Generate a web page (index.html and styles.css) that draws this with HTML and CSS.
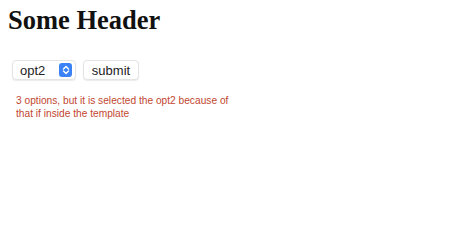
FILE: index.html
```html
<!DOCTYPE html>
<html lang="en">

<head>
  <meta charset="UTF-8">
  <meta name="viewport" content="width=device-width, initial-scale=1.0">
  <title>Some Header</title>
  <link rel="stylesheet" href="styles.css">
</head>

<body>
  <h1>Some Header</h1>
  <form class="row">
    <div class="select">
      <span>opt2</span>
      <span class="arrows">
        <svg width="8" height="10" viewBox="0 0 8 10">
          <path d="M1.5 4 L4 1.5 L6.5 4 M1.5 6 L4 8.5 L6.5 6" fill="none" stroke="#fff" stroke-width="1.4" stroke-linecap="round" stroke-linejoin="round"/>
        </svg>
      </span>
    </div>
    <button type="button" class="btn">submit</button>
  </form>
  <p class="note">3 options, but it is selected the opt2 because of<br>that if inside the template</p>
</body>

</html>
```

FILE: styles.css
```css
body {
  margin: 8px;
  background: #fff;
}
h1 {
  font-family: "Liberation Serif", serif;
  font-size: 26.5px;
  font-weight: bold;
  margin: 0;
  line-height: 24px;
  color: #111;
}
.row {
  display: flex;
  gap: 7px;
  margin: 28px 0 0 4px;
  font-family: "Liberation Sans", Arial, sans-serif;
  font-size: 13px;
}
.select, .btn {
  height: 20px;
  box-sizing: border-box;
  border: 1px solid #e4e4e4;
  border-radius: 4px;
  background: #fff;
  box-shadow: 0 1px 1px rgba(0, 0, 0, 0.08);
  color: #222;
  font-family: inherit;
  font-size: 13px;
}
.select {
  width: 64px;
  display: flex;
  align-items: center;
  justify-content: space-between;
  padding: 0 3px 0 7px;
}
.arrows {
  width: 13px;
  height: 14px;
  border-radius: 3px;
  background: #3b82f6;
  display: flex;
  align-items: center;
  justify-content: center;
}
.btn {
  width: 56px;
  padding: 0;
}
.note {
  font-family: "Liberation Sans", Arial, sans-serif;
  font-size: 10.2px;
  line-height: 12.5px;
  color: #c2462f;
  margin: 15px 0 0 8px;
}
```
